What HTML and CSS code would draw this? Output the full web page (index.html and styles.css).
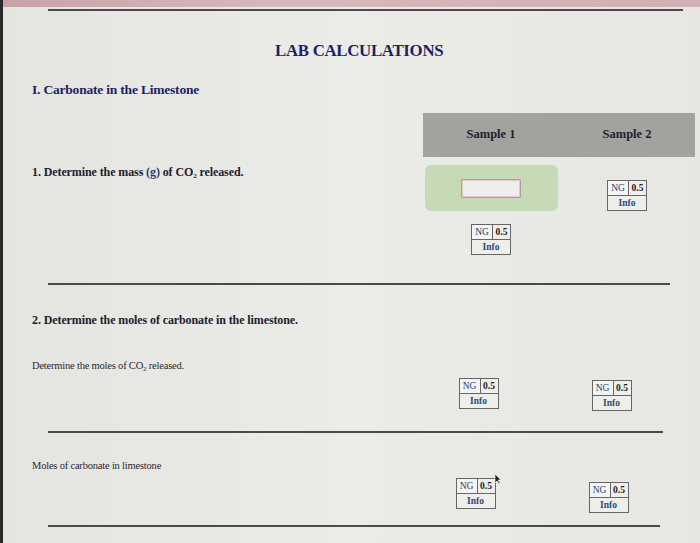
FILE: index.html
```html
<!DOCTYPE html>
<html>
<head>
<meta charset="utf-8">
<link rel="stylesheet" href="styles.css">
</head>
<body>
<div class="screen">
  <div class="topstrip"></div>
  <div class="page">
    <div class="rule rule-top"></div>
    <h1 class="title">LAB CALCULATIONS</h1>
    <h2 class="section">I. Carbonate in the Limestone</h2>

    <div class="grid grid-a">
      <div></div>
      <div class="head-cell">Sample 1</div>
      <div class="head-cell head-last">Sample 2</div>
    </div>

    <div class="grid grid-a row-q1">
      <div class="q">1. Determine the mass <span class="link">(g)</span> of CO<sub>2</sub> released.</div>
      <div class="cell"><div class="green"><div class="input"></div></div></div>
      <div class="cell cell-mid"><table class="ng"><tr><td class="ngl">NG</td><td class="ngv">0.5</td></tr><tr><td colspan="2" class="info">Info</td></tr></table></div>
    </div>

    <div class="grid grid-a row-q1b">
      <div></div>
      <div class="cell"><table class="ng"><tr><td class="ngl">NG</td><td class="ngv">0.5</td></tr><tr><td colspan="2" class="info">Info</td></tr></table></div>
      <div></div>
    </div>

    <div class="rule rule-2"></div>

    <div class="q q2">2. Determine the moles of carbonate in the limestone.</div>

    <div class="sub sub1">Determine the moles of CO<sub>2</sub> released.</div>
    <div class="grid grid-b">
      <div></div>
      <div class="cell"><table class="ng"><tr><td class="ngl">NG</td><td class="ngv">0.5</td></tr><tr><td colspan="2" class="info">Info</td></tr></table></div>
      <div class="cell low"><table class="ng"><tr><td class="ngl">NG</td><td class="ngv">0.5</td></tr><tr><td colspan="2" class="info">Info</td></tr></table></div>
    </div>

    <div class="rule rule-3"></div>

    <div class="sub sub2">Moles of carbonate in limestone</div>
    <div class="grid grid-c">
      <div></div>
      <div class="cell cursor-cell"><table class="ng"><tr><td class="ngl">NG</td><td class="ngv">0.5</td></tr><tr><td colspan="2" class="info">Info</td></tr></table>
        <svg class="cursor" width="8" height="12" viewBox="0 0 8 12"><path d="M1 1 L1 10 L3 8 L5 11 L6 10 L4 7 L7 7 Z" fill="#222" stroke="#fff" stroke-width="0.6"/></svg>
      </div>
      <div class="cell low"><table class="ng"><tr><td class="ngl">NG</td><td class="ngv">0.5</td></tr><tr><td colspan="2" class="info">Info</td></tr></table></div>
    </div>

    <div class="rule rule-4"></div>
  </div>
</div>
</body>
</html>
```

FILE: styles.css
```css
html, body {
  margin: 0;
  padding: 0;
}
body {
  width: 700px;
  height: 543px;
  overflow: hidden;
  background: #e7e7e3;
  font-family: "Liberation Serif", "Times New Roman", serif;
}
.screen {
  height: 543px;
  border-left: 3px solid #2a2a2a;
  background: linear-gradient(90deg, #e4e4e0 0%, #ebebe7 50%, #e6e6e2 100%);
  box-sizing: border-box;
}
.topstrip {
  height: 7px;
  background: linear-gradient(90deg, #c9a2a8 0%, #d8b8bc 40%, #d3aeb3 100%);
}
.page {
  padding-top: 2px;
}
.rule {
  height: 2px;
  background: #4a4a4a;
  margin-left: 45px;
}
.rule-top { width: 635px; }
.rule-2 { width: 622px; margin-top: 28px; }
.rule-3 { width: 615px; margin-top: 20px; }
.rule-4 { width: 612px; margin-top: 12px; }

.title {
  margin: 29px 0 0 0;
  text-align: center;
  font-size: 17.5px;
  font-weight: bold;
  color: #1c1f6a;
  letter-spacing: -0.3px;
  transform: scaleX(0.96);
  padding-left: 16px;
  line-height: 20px;
}
.section {
  margin: 22px 0 0 29px;
  font-size: 13.5px;
  font-weight: bold;
  color: #1c1f66;
  line-height: 16px;
  letter-spacing: -0.2px;
}
.grid {
  display: grid;
}
.grid-a { grid-template-columns: 420px 136px 136px; }
.grid-b { grid-template-columns: 409px 133px 133px; margin-top: 6px; }
.grid-c { grid-template-columns: 406px 133px 133px; margin-top: 6px; }

.head-cell {
  margin-top: 15px;
  height: 44px;
  background: #a2a29f;
  display: flex;
  align-items: center;
  justify-content: center;
  font-weight: bold;
  font-size: 12.5px;
  color: #1e1e2a;
  padding-bottom: 2px;
  box-sizing: border-box;
}
.row-q1 { margin-top: 8px; }
.q {
  padding-left: 29px;
  font-size: 12px;
  font-weight: bold;
  color: #1f2030;
  line-height: 14px;
  letter-spacing: -0.1px;
}
.q sub, .sub sub {
  font-size: 7px;
  vertical-align: -2px;
  line-height: 0;
}
.link { color: #2d3a7a; }
.cell {
  display: flex;
  justify-content: center;
  align-items: flex-start;
}
.cell-mid { padding-top: 15px; }
.green {
  width: 133px;
  height: 46px;
  background: #c6dab5;
  border-radius: 6px;
  display: flex;
  align-items: center;
  justify-content: center;
}
.input {
  width: 58px;
  height: 17px;
  background: #efeded;
  border: 1px solid #b79a9c;
  border-radius: 1px;
  box-shadow: inset 0 0 0 1px #e8c7c9;
}
.row-q1b { margin-top: 13px; }

.ng {
  border-collapse: collapse;
  border: 1px solid #333;
  font-size: 9.5px;
  width: 40px;
  height: 31px;
  background: #eeeeea;
}
.ng td {
  border: 1px solid #666;
  padding: 0;
  text-align: center;
  line-height: 13px;
}
.ngl { color: #2a3f6a; width: 20px; background: #f3f4f4; }
.ngv { color: #222; font-weight: bold; }
.info { color: #2c4a78; font-weight: bold; }

.q2 { margin-top: 28px; }
.sub {
  padding-left: 29px;
  font-size: 10.5px;
  color: #2a2a30;
  line-height: 12px;
  letter-spacing: -0.2px;
}
.sub1 { margin-top: 33px; }
.sub2 { margin-top: 27px; }
.low { padding-top: 2px; }
.grid-c .low { padding-top: 4px; }
.cursor-cell { position: relative; }
.cursor {
  position: absolute;
  left: 85px;
  top: -5px;
}
```
